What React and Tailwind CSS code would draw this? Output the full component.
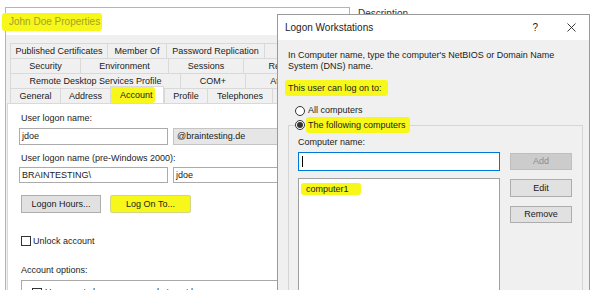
import React from 'react';

const hl = 'bg-[#f7f71a]';

function Tab({ w, children, selected }) {
  if (selected) {
    return (
      <div className={`h-[17px] -mt-[2px] bg-white border-l border-t border-r border-[#d9d9d9] flex shrink-0`} style={{ width: w }}>
        <div className={`${hl} w-[44px] h-full rounded-r-[3px] pl-[9px] leading-[17px]`}>{children}</div>
      </div>
    );
  }
  return (
    <div
      className="h-[15px] shrink-0 border-l border-t border-[#d9d9d9] bg-[#f0f0f0] text-center leading-[14px] whitespace-nowrap overflow-hidden"
      style={{ width: w }}
    >
      {children}
    </div>
  );
}

const tabRows = [
  [['Published Certificates', 97], ['Member Of', 59], ['Password Replication', 98], ['Dial-in', 90]],
  [['Security', 70], ['Environment', 88], ['Sessions', 75], ['Remote control', 111]],
  [['Remote Desktop Services Profile', 170], ['COM+', 65], ['Attribute Editor', 109]],
];

function PropertiesWindow() {
  return (
    <div className="absolute left-[5px] top-[7px] w-[345px] h-[300px] bg-white border-t border-l border-r border-[#b4b4b4] flex flex-col">
      {/* title bar */}
      <div className="h-[27px] shrink-0 flex items-center">
        <span className={`${hl} -ml-[4px] inline-block h-[18px] leading-[18px] pl-[7px] pr-[2px] rounded-[3px] text-[10px] text-[#a3a323]`}>
          John Doe Properties
        </span>
      </div>

      <div className="flex-1 bg-[#f0f0f0] pt-[8px] pl-[1px]">
        {/* tab rows */}
        <div className="pl-[3px] flex flex-col">
          {tabRows.map((row, i) => (
            <div key={i} className="flex">
              {row.map(([label, w]) => (
                <Tab key={label} w={w}>{label}</Tab>
              ))}
            </div>
          ))}
          <div className="flex items-end h-[15px]">
            <Tab w={50}>General</Tab>
            <Tab w={50}>Address</Tab>
            <Tab w={54} selected>Account</Tab>
            <Tab w={43}>Profile</Tab>
            <Tab w={65}>Telephones</Tab>
            <Tab w={80}>Organization</Tab>
          </div>
        </div>

        {/* pane */}
        <div className="bg-white border border-[#d9d9d9] w-[336px] h-[200px] pl-[11px] pt-[9px]">
          <div className="pl-[2px] leading-[11px]">User logon name:</div>
          <div className="flex mt-[4px] h-[17px]">
            <div className="w-[149px] border border-[#ababab] bg-white pl-[2px] leading-[15px]">jdoe</div>
            <div className="ml-[5px] w-[150px] border border-[#c4c4c4] bg-[#e6e6e6] pl-[3px] leading-[15px]">@braintesting.de</div>
          </div>
          <div className="pl-[2px] mt-[8px] leading-[11px]">User logon name (pre-Windows 2000):</div>
          <div className="flex mt-[3px] h-[16px]">
            <div className="w-[149px] border border-[#ababab] bg-white pl-[2px] leading-[14px]">BRAINTESTING\</div>
            <div className="ml-[5px] w-[150px] border border-[#ababab] bg-white pl-[2px] leading-[14px]">jdoe</div>
          </div>
          <div className="flex mt-[12px] pl-[2px] h-[18px]">
            <div className="w-[80px] border border-[#adadad] bg-[#e1e1e1] text-center leading-[16px]">Logon Hours...</div>
            <div className={`ml-[9px] w-[81px] border border-[#d4d48a] ${hl} rounded-[2px] text-center leading-[16px]`}>Log On To...</div>
          </div>
          <div className="flex items-center mt-[23px] pl-[2px] h-[10px]">
            <div className="w-[10px] h-[10px] border border-[#333] bg-white" />
            <span className="ml-[2px] leading-[11px]">Unlock account</span>
          </div>
          <div className="pl-[2px] mt-[19px] leading-[11px]">Account options:</div>
          <div className="ml-[2px] mt-[4px] border border-[#a8a8a8] h-[40px] pl-[10px] pt-[6px]">
            <div className="flex items-center">
              <div className="w-[10px] h-[10px] border border-[#333] bg-white" />
              <span className="ml-[3px] leading-[11px]">User must change password at next logon</span>
            </div>
          </div>
        </div>
      </div>
    </div>
  );
}

function Radio({ checked }) {
  return (
    <span className="w-[10px] h-[10px] rounded-full border border-[#333] bg-white flex items-center justify-center shrink-0">
      {checked && <span className="w-[6px] h-[6px] rounded-full bg-[#333]" />}
    </span>
  );
}

function Btn({ children, disabled, className = '' }) {
  return (
    <div
      className={`w-[62px] border text-center ${
        disabled ? 'border-[#bfbfbf] bg-[#cccccc] text-[#8d8d8d]' : 'border-[#adadad] bg-[#e1e1e1]'
      } ${className}`}
    >
      {children}
    </div>
  );
}

function LogonDialog() {
  return (
    <div className="absolute left-[277px] top-[14px] w-[313px] h-[300px] border border-[#9a9a9a] bg-[#f0f0f0] flex flex-col">
      {/* title bar */}
      <div className="h-[25px] bg-white flex items-center pl-[7px] pr-[13px] shrink-0">
        <span className="text-[10px]">Logon Workstations</span>
        <span className="ml-auto text-[10px]">?</span>
        <svg className="ml-[29px]" width="9" height="9" viewBox="0 0 9 9">
          <path d="M0.5 0.5L8.5 8.5M8.5 0.5L0.5 8.5" stroke="#222" strokeWidth="0.9" />
        </svg>
      </div>

      <div className="flex-1 pl-[10px] pr-[6px] pt-[10px]">
        <div className="leading-[11px]">
          In Computer name, type the computer's NetBIOS or Domain Name
          <br />
          System (DNS) name.
        </div>
        <div className="mt-[8px] h-[16px] flex">
          <span className={`${hl} -ml-[3px] pl-[3px] pr-[6px] leading-[16px] rounded-[3px]`}>This user can log on to:</span>
        </div>
        <div className="mt-[9px] flex items-center pl-[7px] h-[11px]">
          <Radio />
          <span className="ml-[3px] leading-[11px]">All computers</span>
        </div>

        <fieldset className="mt-[1px] border border-[#d5d5d5] h-[200px] px-[9px]">
          <legend className="-ml-[3px] flex items-center h-[16px]">
            <Radio checked />
            <span className={`${hl} ml-[1px] pl-[2px] pr-[4px] leading-[16px] rounded-[3px]`}>The following computers</span>
          </legend>
          <div className="mt-[4px] leading-[11px]">Computer name:</div>
          <div className="flex mt-[4px]">
            <div className="w-[202px] h-[19px] border border-[#0078d7] bg-white flex items-center pl-[3px]">
              <span className="w-px h-[11px] bg-black" />
            </div>
            <Btn disabled className="ml-[10px] mt-[1px] h-[17px] leading-[15px]">Add</Btn>
          </div>
          <div className="flex mt-[7px]">
            <div className="w-[202px] h-[120px] border border-[#a0a0a0] bg-white pt-[4px] pl-[2px]">
              <span className={`${hl} inline-block pl-[5px] pr-[12px] leading-[12px] rounded-[3px]`}>computer1</span>
            </div>
            <div className="ml-[10px] flex flex-col">
              <Btn className="mt-[1px] h-[18px] leading-[16px]">Edit</Btn>
              <Btn className="mt-[9px] h-[17px] leading-[15px]">Remove</Btn>
            </div>
          </div>
        </fieldset>
      </div>
    </div>
  );
}

export default function App() {
  return (
    <div className="w-[600px] h-[299px] bg-white overflow-hidden font-['Liberation_Sans',Arial,sans-serif] text-[9px] text-[#1b1b1b]">
      <div className="relative h-[290px] overflow-hidden">
        <PropertiesWindow />
        <span className="absolute left-[358px] top-[6px] text-[10px] text-[#333]">Description</span>
        <LogonDialog />
      </div>
    </div>
  );
}
